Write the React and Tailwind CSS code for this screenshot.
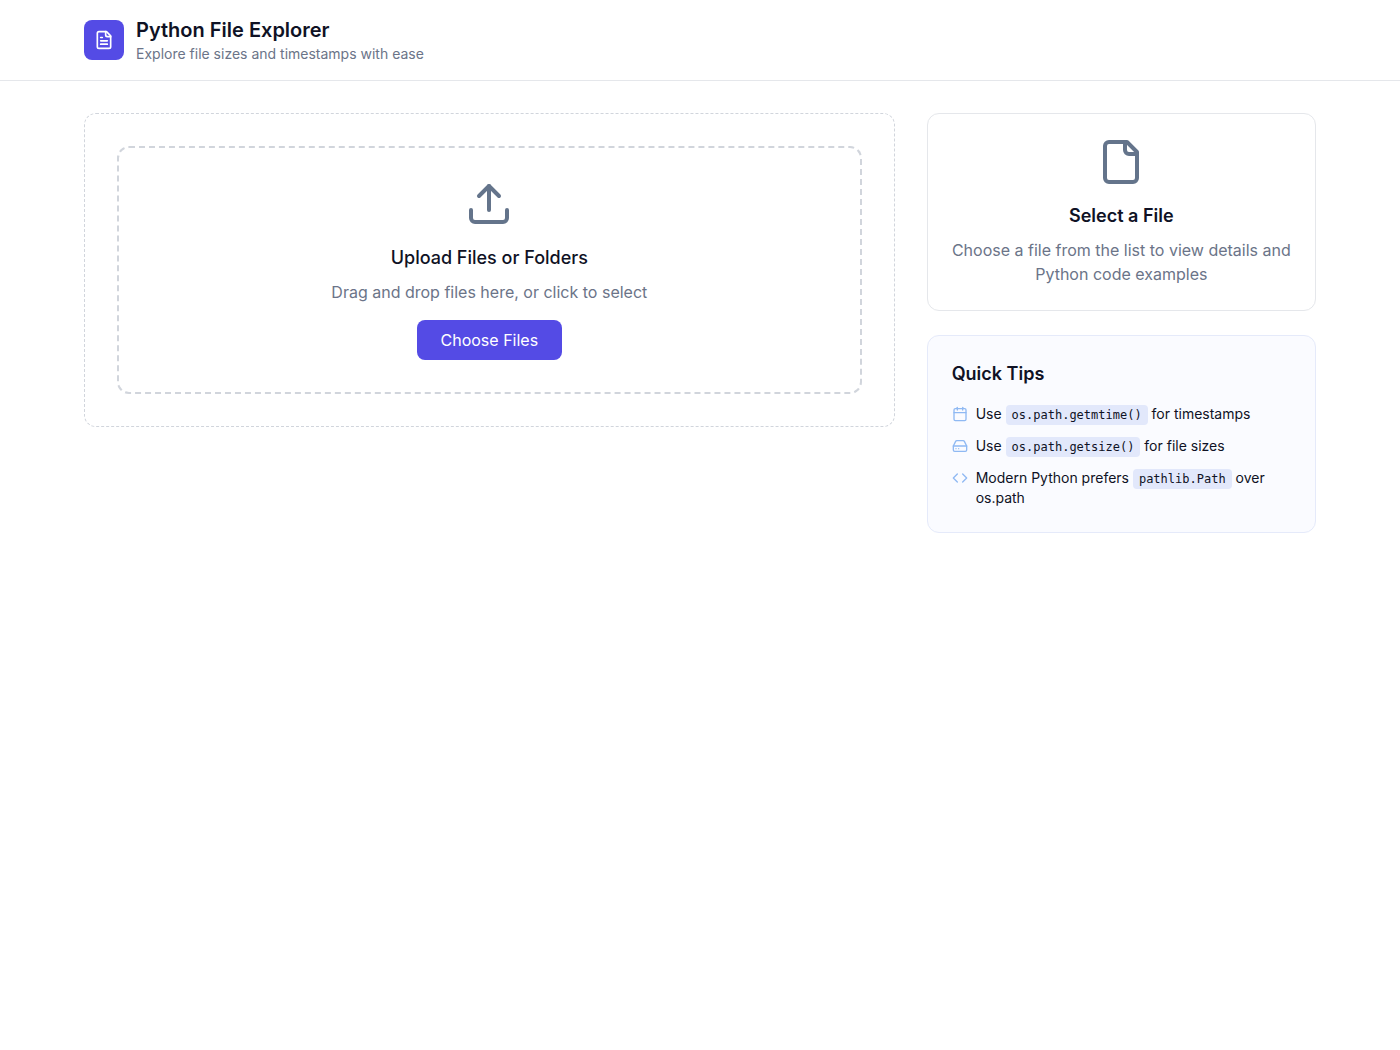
import { Upload, Calendar, HardDrive, Code } from "lucide-react";

function FileIcon({ className, lines = false }) {
  return (
    <svg
      viewBox="0 0 24 24"
      fill="none"
      stroke="currentColor"
      strokeWidth="2"
      strokeLinecap="round"
      strokeLinejoin="round"
      aria-hidden="true"
      className={className}
    >
      <path d="M15 2H6a2 2 0 0 0-2 2v16a2 2 0 0 0 2 2h12a2 2 0 0 0 2-2V7Z" />
      <path d="M14 2v4a2 2 0 0 0 2 2h4" />
      {lines && <path d="M10 9H8M16 13H8M16 17H8" />}
    </svg>
  );
}

function Snippet({ children }) {
  return (
    <code className="rounded-sm bg-[#e2e8fb] px-1.5 py-[3px] font-['DejaVu_Sans_Mono',monospace] text-xs">
      {children}
    </code>
  );
}

function Tip({ icon: Icon, children }) {
  return (
    <li className="flex items-start gap-2">
      <Icon className="mt-0.5 size-4 shrink-0 text-[#8fb9f3]" />
      <span>{children}</span>
    </li>
  );
}

export default function App() {
  return (
    <div className="min-h-screen bg-white font-['Inter',sans-serif] text-[#0f1225]">
      <header className="border-b border-gray-200">
        <div className="mx-auto flex max-w-7xl items-center gap-3 px-6 py-4">
          <div className="flex size-10 items-center justify-center rounded-lg bg-[#544be5] text-white">
            <FileIcon className="size-5" lines />
          </div>
          <div>
            <h1 className="text-xl font-semibold">Python File Explorer</h1>
            <p className="text-sm text-[#6b7488]">Explore file sizes and timestamps with ease</p>
          </div>
        </div>
      </header>
      <main className="mx-auto grid max-w-7xl grid-cols-3 items-start gap-8 px-6 py-8">
        <section className="col-span-2 rounded-xl border border-dashed border-gray-300 p-8">
          <div className="flex flex-col items-center rounded-xl border-2 border-dashed border-gray-300 p-8 text-center">
            <Upload className="mb-4 size-12 text-[#64748b]" />
            <h2 className="mb-2 text-lg font-medium">Upload Files or Folders</h2>
            <p className="mb-4 text-[#6b7488]">Drag and drop files here, or click to select</p>
            <button type="button" className="rounded-lg bg-[#544be5] px-6 py-2 text-white">
              Choose Files
            </button>
          </div>
        </section>
        <aside className="space-y-6">
          <section className="flex flex-col items-center rounded-xl border border-gray-200 p-6 text-center">
            <FileIcon className="mb-4 size-12 text-[#64748b]" />
            <h2 className="mb-2 text-lg font-semibold">Select a File</h2>
            <p className="text-[#6b7488]">Choose a file from the list to view details and Python code examples</p>
          </section>
          <section className="rounded-xl border border-[#e5eafa] bg-[#fafbff] p-6">
            <h2 className="mb-4 text-lg font-semibold">Quick Tips</h2>
            <ul className="space-y-3 text-sm">
              <Tip icon={Calendar}>
                Use <Snippet>os.path.getmtime()</Snippet> for timestamps
              </Tip>
              <Tip icon={HardDrive}>
                Use <Snippet>os.path.getsize()</Snippet> for file sizes
              </Tip>
              <Tip icon={Code}>
                Modern Python prefers <Snippet>pathlib.Path</Snippet> over os.path
              </Tip>
            </ul>
          </section>
        </aside>
      </main>
    </div>
  );
}
